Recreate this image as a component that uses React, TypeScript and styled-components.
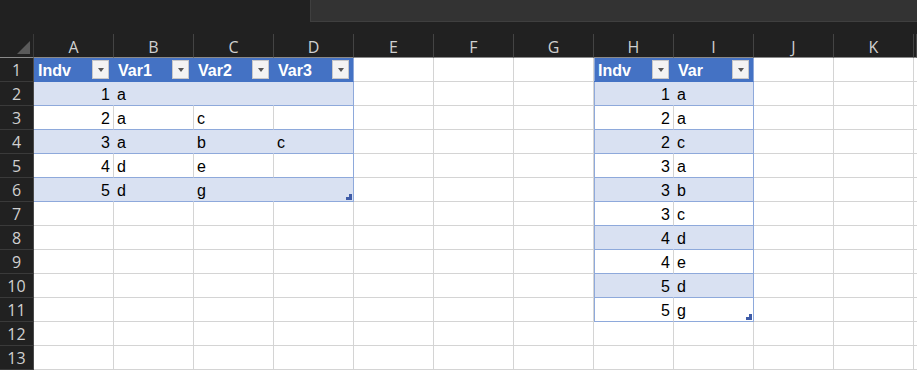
import React, { type FC } from 'react';
import styled, { createGlobalStyle } from 'styled-components';

const GlobalStyle = createGlobalStyle`
  html, body {
    margin: 0;
    padding: 0;
    background: #212121;
    overflow: hidden;
  }
`;

type Kind = 'plain' | 'head' | 'band' | 'white';

const COLS = ['A', 'B', 'C', 'D', 'E', 'F', 'G', 'H', 'I', 'J', 'K', ''];
const ROWS = 13;

type Table = {
  col: number;
  row: number;
  head: string[];
  data: (number | string)[][];
};

const TABLES: Table[] = [
  {
    col: 0,
    row: 1,
    head: ['Indv', 'Var1', 'Var2', 'Var3'],
    data: [
      [1, 'a', '', ''],
      [2, 'a', 'c', ''],
      [3, 'a', 'b', 'c'],
      [4, 'd', 'e', ''],
      [5, 'd', 'g', ''],
    ],
  },
  {
    col: 7,
    row: 1,
    head: ['Indv', 'Var'],
    data: [
      [1, 'a'],
      [2, 'a'],
      [2, 'c'],
      [3, 'a'],
      [3, 'b'],
      [3, 'c'],
      [4, 'd'],
      [4, 'e'],
      [5, 'd'],
      [5, 'g'],
    ],
  },
];

const Page = styled.div`
  width: 917px;
  height: 370px;
  background: #212121;
  overflow: hidden;
`;

const TopBar = styled.div`
  height: 34px;
  display: flex;
  justify-content: flex-end;
  align-items: flex-start;
`;

const FormulaBox = styled.div`
  width: 606px;
  height: 21px;
  background: #333333;
  border-left: 1px solid #3f3f3f;
  border-bottom: 1px solid #3f3f3f;
`;

const Sheet = styled.div`
  display: grid;
  grid-template-columns: 34px repeat(11, 80px) 3px;
  grid-auto-rows: 24px;
  font-family: 'Liberation Sans', Arial, sans-serif;
`;

const Corner = styled.div`
  position: relative;
  background: #212121;
  border-right: 1px solid #3a3a3a;
  border-bottom: 1px solid #8a8a8a;
  box-sizing: border-box;
  overflow: hidden;
  &::after {
    content: '';
    position: absolute;
    right: 3px;
    bottom: 3px;
    width: 0;
    height: 0;
    border-left: 13px solid transparent;
    border-bottom: 13px solid #5a5a5a;
  }
`;

const ColHead = styled.div`
  display: flex;
  align-items: center;
  justify-content: center;
  box-sizing: border-box;
  padding-top: 2px;
  background: #212121;
  color: #d0d0d0;
  font-family: 'Open Sans', 'Noto Sans', sans-serif;
  font-size: 16px;
  border-right: 1px solid #444;
  border-bottom: 1px solid #8a8a8a;
`;

const RowHead = styled.div`
  display: flex;
  align-items: center;
  justify-content: center;
  box-sizing: border-box;
  padding-top: 1px;
  background: #212121;
  color: #d0d0d0;
  font-family: 'Open Sans', 'Noto Sans', sans-serif;
  font-size: 16px;
  border-right: 1px solid #4a4a4a;
  border-bottom: 1px solid #3a3a3a;
`;

const bg: Record<Kind, string> = {
  plain: '#ffffff',
  white: '#ffffff',
  band: '#d9e1f2',
  head: '#4472c4',
};

const Cell = styled.div<{
  $kind: Kind;
  $num?: boolean;
  $first?: boolean;
  $last?: boolean;
}>`
  position: relative;
  display: flex;
  align-items: center;
  justify-content: ${({ $num }) => ($num ? 'flex-end' : 'flex-start')};
  box-sizing: border-box;
  padding: 2px 3px 0 3px;
  background: ${({ $kind }) => bg[$kind]};
  color: ${({ $kind }) => ($kind === 'head' ? '#ffffff' : '#000000')};
  font-size: 16px;
  font-weight: ${({ $kind }) => ($kind === 'head' ? 700 : 400)};
  white-space: nowrap;
  border-right: 1px solid
    ${({ $kind, $last }) =>
      $last
        ? '#8ea9db'
        : $kind === 'head'
        ? '#4472c4'
        : $kind === 'band'
        ? '#d9e1f2'
        : '#d4d4d4'};
  border-bottom: 1px solid
    ${({ $kind }) =>
      $kind === 'plain' ? '#d4d4d4' : $kind === 'head' ? '#4472c4' : '#8ea9db'};
  box-shadow: ${({ $first }) => ($first ? 'inset 1px 0 0 #8ea9db' : 'none')};
`;

const HeadLabel = styled.span`
  flex: 1;
  padding-left: 1px;
`;

const FilterButton = styled.div`
  width: 17px;
  height: 19px;
  margin-right: 1px;
  box-sizing: border-box;
  background: #f3f3f3;
  border: 1px solid #c8c8c8;
  display: flex;
  align-items: center;
  justify-content: center;
  margin-top: -2px;
  &::after {
    content: '';
    width: 0;
    height: 0;
    border-left: 3.5px solid transparent;
    border-right: 3.5px solid transparent;
    border-top: 4px solid #555;
  }
`;

const ResizeHandle = styled.svg`
  position: absolute;
  right: 1px;
  bottom: 1px;
`;

type Info = {
  kind: Kind;
  value?: string | number;
  head?: boolean;
  first?: boolean;
  last?: boolean;
  corner?: boolean;
};

const cellInfo = (row: number, col: number): Info => {
  for (const t of TABLES) {
    const c = col - t.col;
    const r = row - t.row;
    if (c < 0 || c >= t.head.length || r < 0 || r > t.data.length) continue;
    const first = c === 0 && t.col > 0;
    const last = c === t.head.length - 1;
    if (r === 0) return { kind: 'head', value: t.head[c], head: true, first, last };
    return {
      kind: r % 2 === 1 ? 'band' : 'white',
      value: t.data[r - 1][c],
      first,
      last,
      corner: last && r === t.data.length,
    };
  }
  return { kind: 'plain' };
};

const SheetCell: FC<{ row: number; col: number }> = ({ row, col }) => {
  const info = cellInfo(row, col);
  const num = typeof info.value === 'number';
  return (
    <Cell $kind={info.kind} $num={num} $first={info.first} $last={info.last}>
      {info.head ? (
        <>
          <HeadLabel>{info.value}</HeadLabel>
          <FilterButton />
        </>
      ) : (
        info.value
      )}
      {info.corner && (
        <ResizeHandle width="6" height="6" viewBox="0 0 6 6">
          <path d="M3 0H6V6H0V3H3Z" fill="#3f5ca8" />
        </ResizeHandle>
      )}
    </Cell>
  );
};

export default function App() {
  return (
    <Page>
      <GlobalStyle />
      <TopBar>
        <FormulaBox />
      </TopBar>
      <Sheet>
        <Corner />
        {COLS.map((c, i) => (
          <ColHead key={i}>{c}</ColHead>
        ))}
        {Array.from({ length: ROWS }, (_, r) => (
          <React.Fragment key={r}>
            <RowHead>{r + 1}</RowHead>
            {COLS.map((_, c) => (
              <SheetCell key={c} row={r + 1} col={c} />
            ))}
          </React.Fragment>
        ))}
      </Sheet>
    </Page>
  );
}
